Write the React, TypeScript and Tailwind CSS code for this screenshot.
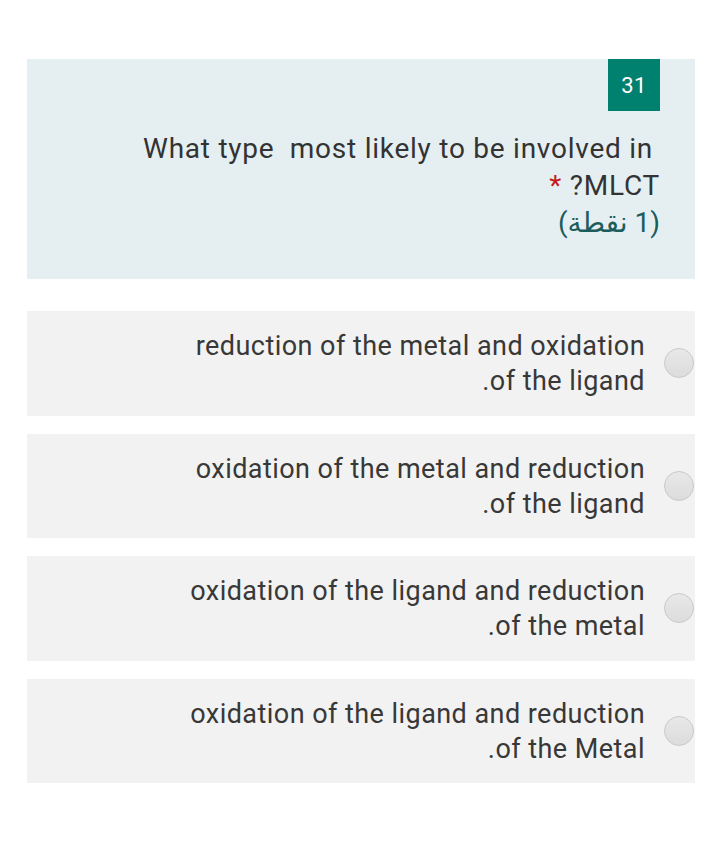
const options = [
  ["reduction of the metal and oxidation", ".of the ligand"],
  ["oxidation of the metal and reduction", ".of the ligand"],
  ["oxidation of the ligand and reduction", ".of the metal"],
  ["oxidation of the ligand and reduction", ".of the Metal"],
];

function Radio() {
  return (
    <span className="block h-[30px] w-[30px] shrink-0 rounded-full border border-[#c9c9c9] bg-gradient-to-b from-[#e8e8e8] to-[#dcdcdc]" />
  );
}

export default function App() {
  return (
    <div
      className="min-h-[858px] w-[720px] bg-white pl-[27px] pr-[25px] pt-[59px] text-[#383838]"
      style={{ fontFamily: "Roboto, 'Noto Sans', 'DejaVu Sans', sans-serif" }}
    >
      {/* question header */}
      <div className="flex h-[220px] flex-col items-end bg-[#e5eff2] pr-[35px]">
        <div className="flex h-[52px] w-[52px] items-center justify-center bg-[#00806f] text-[22px] tracking-[0.5px] text-white">
          31
        </div>
        <div className="mt-[19px] text-right text-[28px] leading-[37px] tracking-[0.75px] text-[#333333]">
          <div className="pr-[7px]">What type&nbsp; most likely to be involved in</div>
          <div>
            <span className="text-[#c41a1a]">*</span> ?MLCT
          </div>
          <div dir="rtl" className="text-[#1c5c5c]">
            (1 نقطة)
          </div>
        </div>
      </div>

      {/* answers */}
      <div className="mt-[32px] flex flex-col gap-[18px]">
        {options.map(([a, b], i) => (
          <div
            key={i}
            className="flex h-[104.5px] items-center justify-end gap-[19px] bg-[#f2f2f2] pr-px"
          >
            <div className="pt-[2px] text-right text-[27px] leading-[35px] tracking-[0.45px]">
              <div>{a}</div>
              <div>{b}</div>
            </div>
            <Radio />
          </div>
        ))}
      </div>
    </div>
  );
}
